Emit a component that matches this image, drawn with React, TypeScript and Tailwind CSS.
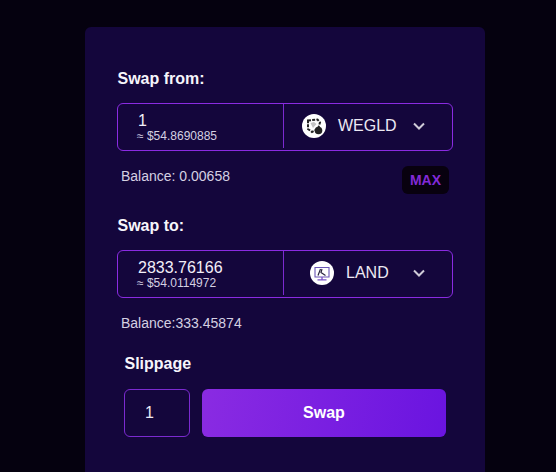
import React from 'react';

function TokenRow({ amount, usd, name, icon, pad }: { amount: string; usd: string; name: string; icon: React.ReactNode; pad: string }) {
  return (
    <div className="flex h-12 w-[336px] rounded-md border border-[#8a2be2]">
      <div className="mb-[2px] flex w-[166px] flex-col border-r border-[#7b2ad0] pl-5 pt-2">
        <span className="text-base leading-[18px] text-[#f2eff8]">{amount}</span>
        <span className="-ml-px text-xs leading-[13px] text-[#d5d0e2]">≈ {usd}</span>
      </div>
      <div className={`flex flex-1 items-center pb-0.5 ${pad}`}>
        {icon}
        <span className="text-base text-[#ece9f3]">{name}</span>
        <svg className="ml-auto mr-[26px] h-[14px] w-[14px]" viewBox="0 0 14 14" fill="none" stroke="#cfcbd8" strokeWidth="2">
          <path d="M2 4.5 7 9.5 12 4.5" />
        </svg>
      </div>
    </div>
  );
}

function WegldIcon() {
  return (
    <svg className="mr-[12px] h-6 w-6 shrink-0" viewBox="0 0 24 24">
      <circle cx="12" cy="12" r="12" fill="#fff" />
      <path d="M6 6.5 15.5 5.5 18 8.5 16 15 10 18 6 15Z" fill="none" stroke="#222" strokeWidth="2" strokeDasharray="3 1.2" />
      <path d="M8.5 9 12 8 14.5 10 11 14Z" fill="#c4c4c4" />
      <circle cx="16.5" cy="16.5" r="3.8" fill="#222" />
    </svg>
  );
}

function LandIcon() {
  return (
    <svg className="mr-[12px] h-6 w-6 shrink-0" viewBox="0 0 24 24" fill="none">
      <circle cx="12" cy="12" r="12" fill="#fff" />
      <path d="M5 6.5H19V16H5Z" stroke="#6a55b5" strokeWidth="1.1" />
      <path d="M8 14.5 10.5 8M12 8 11 11.5 15.5 14.5" stroke="#2a2540" strokeWidth="1.2" />
      <path d="M12 16V18.5M7.5 18.8H16.5" stroke="#7a52c8" strokeWidth="1.3" />
    </svg>
  );
}

export default function App() {
  return (
    <div className="h-[472px] w-[556px] overflow-hidden bg-[#05010f] pl-[85px] pt-[27px] font-['Liberation_Sans',Arial,sans-serif]">
      <div className="h-[445px] w-[400px] rounded-t-md bg-[#14063c] px-8 pt-[43px]">
        <p className="ml-[0.5px] text-base leading-[18px] font-bold text-[#f7f5fb]">Swap from:</p>
        <div className="mt-[15px]">
          <TokenRow amount="1" usd="$54.8690885" name="WEGLD" icon={<WegldIcon />} pad="pl-[18px]" />
        </div>
        <div className="flex h-[43px] items-start justify-between">
          <span className="ml-1 mt-[17px] text-sm leading-4 text-[#d5d0e2]">Balance: 0.00658</span>
          <button className="mr-1 mt-[15px] h-7 w-[47px] rounded-md bg-[#08010f] text-sm font-bold text-[#8229d8]">MAX</button>
        </div>
        <p className="ml-[0.5px] mt-[23px] text-base leading-[18px] font-bold text-[#f7f5fb]">Swap to:</p>
        <div className="mt-[15px]">
          <TokenRow amount="2833.76166" usd="$54.0114972" name="LAND" icon={<LandIcon />} pad="pl-[26px]" />
        </div>
        <p className="ml-1 mt-[17px] text-sm leading-4 text-[#d5d0e2]">Balance:333.45874</p>
        <p className="ml-[7.5px] mt-[24px] text-base leading-[18px] font-bold text-[#f7f5fb]">Slippage</p>
        <div className="ml-[7px] mt-4 flex gap-3">
          <div className="flex h-12 w-[66px] items-center rounded-md border border-[#7b2ad0] pl-5 text-base text-[#ece9f3]">1</div>
          <button className="h-12 w-[244px] rounded-md bg-[linear-gradient(100deg,#8a2be2,#6a14e0)] text-base font-bold text-white">Swap</button>
        </div>
      </div>
    </div>
  );
}
